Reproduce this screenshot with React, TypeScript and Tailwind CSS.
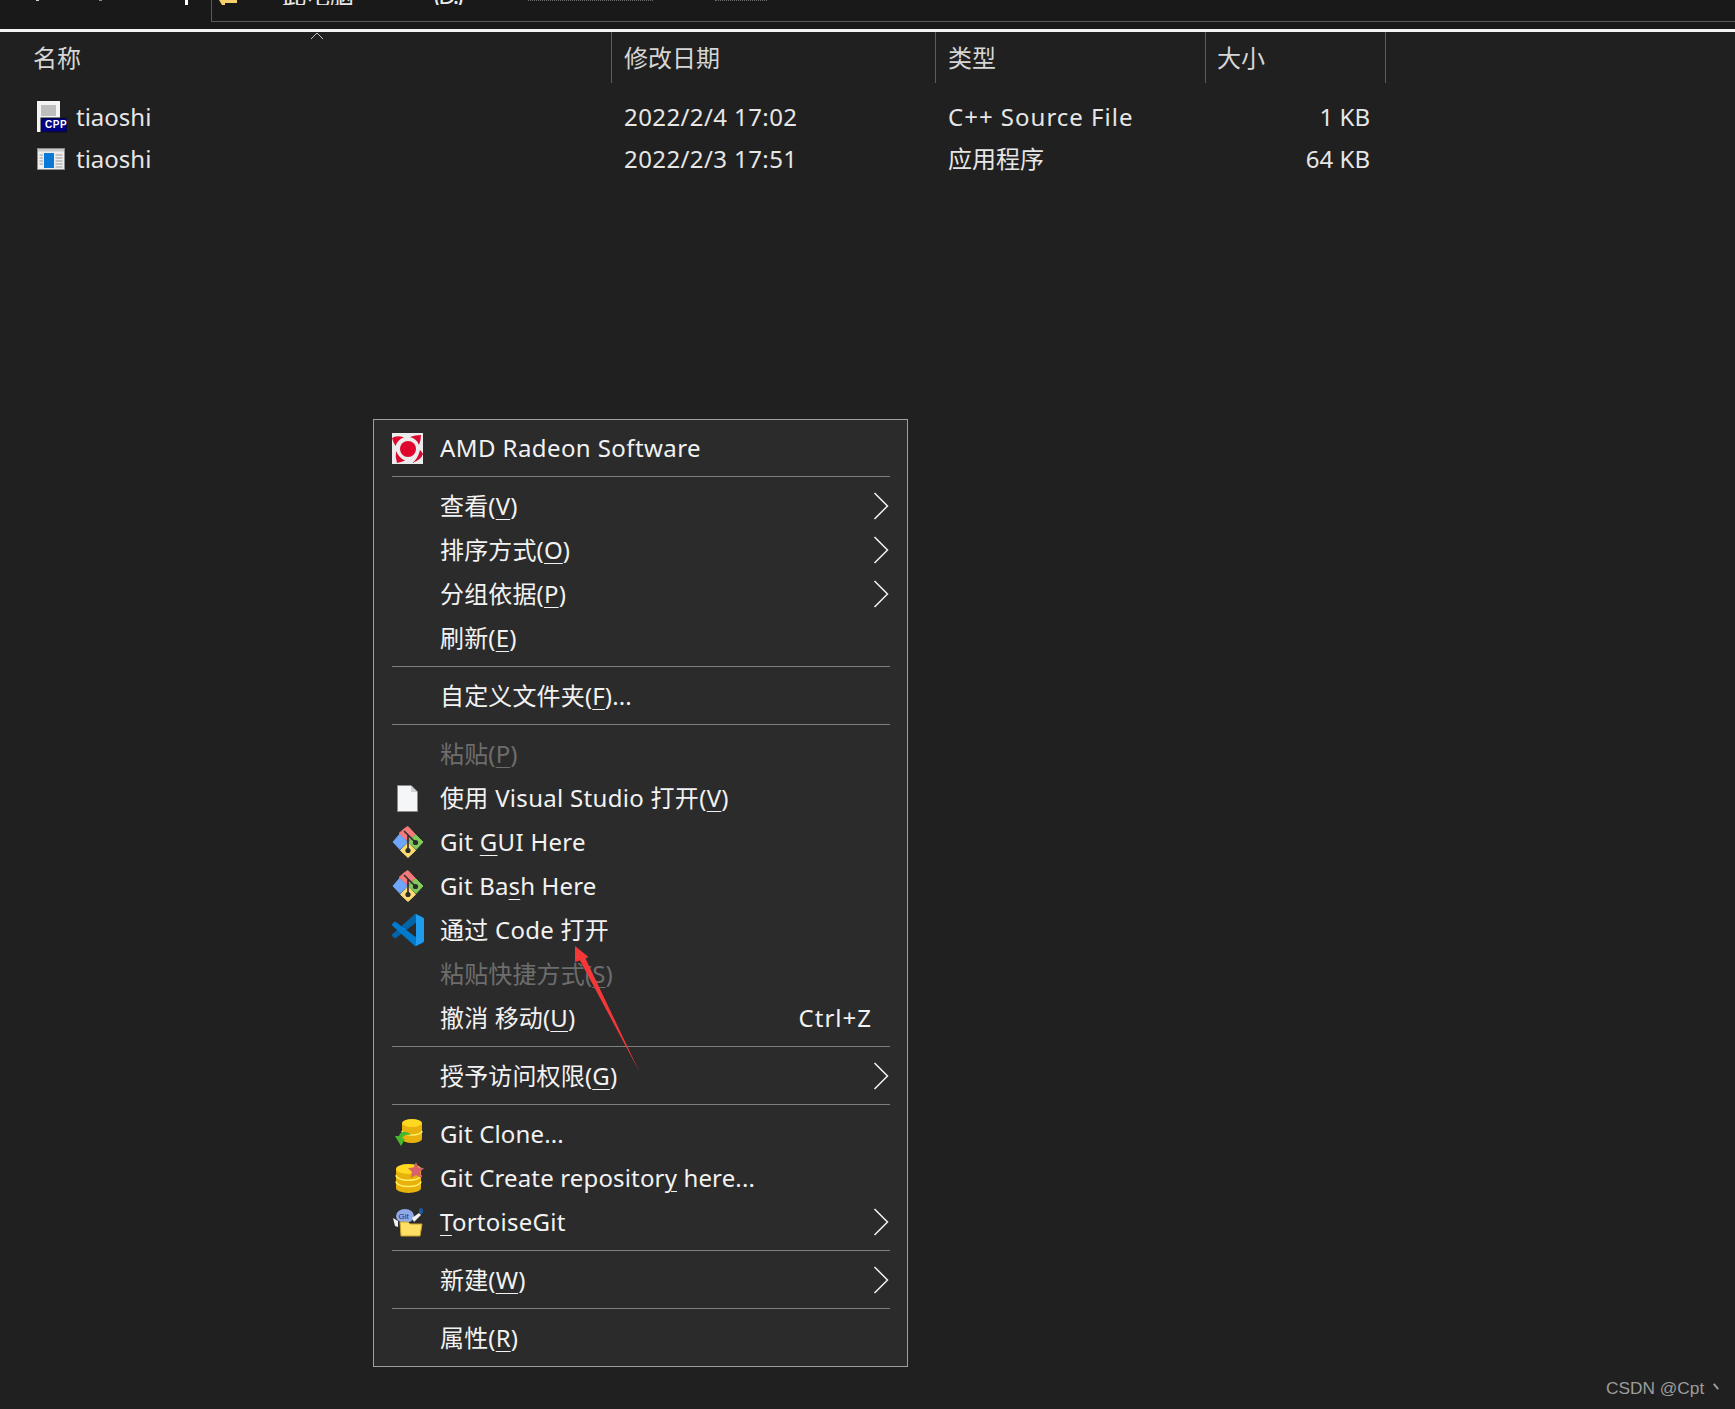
const FONT = "font-['Noto_Sans','Noto_Sans_CJK_SC',sans-serif]";

function AmdIcon() {
  return (
    <svg width="31" height="31" viewBox="0 0 31 31">
      <rect width="31" height="31" fill="#ececec" />
      <circle cx="16" cy="16" r="8" fill="#e0052d" />
      <path d="M0 5 Q5 2 12 4.5 Q6 6 3.5 13 Q1 9 0 5 Z" fill="#e0052d" />
      <path d="M29 2 Q29 7 27 12 Q25 6 18 4 Q23 2 29 2 Z" fill="#d8082f" />
      <path d="M5 30 Q3 24 4 18 Q7 25 13 27.5 Q9 29 5 30 Z" fill="#d8082f" />
      <path d="M31 21 Q29 27 20 30 Q26 26 28 17 Q30 19 31 21 Z" fill="#d8082f" />
    </svg>
  );
}

function DocIcon() {
  return (
    <svg width="21" height="27" viewBox="0 0 21 27">
      <path d="M0.5 0.5 H14 L20.5 7 V26.5 H0.5 Z" fill="#f4f6f8" stroke="#8b8b8b" />
      <path d="M14 0.5 V7 H20.5 Z" fill="#cfd3d6" />
    </svg>
  );
}

function GitIcon() {
  return (
    <svg width="32" height="32" viewBox="0 0 32 32" className="shrink-0" strokeLinejoin="round">
      <path d="M12.5 2.5 L16 0.5 L23 8 L16 15.5 L7 7.5 Z" fill="#f57a7a" stroke="#f57a7a" />
      <path d="M7.5 8.5 L1 16 L8 23.5 L15.5 16 Z" fill="#6ea6fb" stroke="#6ea6fb" />
      <path d="M23.5 8.5 L16.5 16 L24 23.5 L31 16 Z" fill="#7fcb5b" stroke="#7fcb5b" />
      <path d="M16 16.5 L8.5 24.5 L16 31.5 L23.5 24.5 Z" fill="#fbdc72" stroke="#fbdc72" />
      <path d="M12 5 L16 9 V24 M16 9 L23 16" stroke="#2b2b2b" strokeWidth="1.6" fill="none" />
      <circle cx="16" cy="24.5" r="2.6" fill="#2b2b2b" />
      <circle cx="23.5" cy="16.5" r="2.6" fill="#2b2b2b" />
    </svg>
  );
}

function CodeIcon() {
  return (
    <svg width="32" height="32" viewBox="0 0 100 100" className="shrink-0">
      <path d="M96.4614 10.7962L75.8569 0.875542C73.4719 -0.272773 70.6217 0.211611 68.75 2.08333L1.29858 63.5832C-0.515693 65.2373 -0.513607 68.0937 1.30308 69.7452L6.81272 74.754C8.29793 76.1042 10.5347 76.2036 12.1338 74.9905L93.3609 13.3699C96.086 11.3026 100 13.2462 100 16.6667V16.4275C100 14.0265 98.6246 11.8378 96.4614 10.7962Z" fill="#0065a9" />
      <path d="M96.4614 89.2038L75.8569 99.1245C73.4719 100.273 70.6217 99.7884 68.75 97.9167L1.29858 36.4168C-0.515693 34.7627 -0.513607 31.9063 1.30308 30.2548L6.81272 25.246C8.29793 23.8958 10.5347 23.7964 12.1338 25.0095L93.3609 86.6301C96.086 88.6974 100 86.7538 100 83.3333V83.5725C100 85.9735 98.6246 88.1622 96.4614 89.2038Z" fill="#007acc" />
      <path d="M75.8578 99.1263C73.4721 100.274 70.6219 99.7885 68.75 97.9166C71.0564 100.223 75 98.5895 75 95.3278V4.67213C75 1.41039 71.0564 -0.223106 68.75 2.08329C70.6219 0.211402 73.4721 -0.273666 75.8578 0.873633L96.4587 10.7807C98.6234 11.8217 100 14.0112 100 16.4132V83.5871C100 85.9891 98.6234 88.1786 96.4586 89.2196L75.8578 99.1263Z" fill="#1f9cf0" />
    </svg>
  );
}

function Coins({ x, y, w, rows, rowH }: { x: number; y: number; w: number; rows: number; rowH: number }) {
  const rx = w / 2;
  const ry = w / 5;
  const h = rows * rowH;
  return (
    <g>
      <path d={`M${x} ${y + ry} V${y + ry + h} A${rx} ${ry} 0 0 0 ${x + w} ${y + ry + h} V${y + ry} Z`} fill="#e8b10c" />
      {Array.from({ length: rows - 1 }).map((_, i) => (
        <path
          key={i}
          d={`M${x} ${y + ry + (i + 1) * rowH} A${rx} ${ry} 0 0 0 ${x + w} ${y + ry + (i + 1) * rowH}`}
          stroke="#fff06a"
          strokeWidth="1.5"
          fill="none"
        />
      ))}
      <ellipse cx={x + rx} cy={y + ry} rx={rx} ry={ry} fill="#ffd91f" />
    </g>
  );
}

function CloneIcon() {
  return (
    <svg width="32" height="30" viewBox="0 0 32 30" className="shrink-0">
      <Coins x={10} y={0} w={20} rows={2} rowH={8} />
      <path d="M3 17 L9 27 L13 20 L10 19 C12 16 15 15 19 16 C15 11 8 12 7 17 Z" fill="#46b82c" />
    </svg>
  );
}

function CreateIcon() {
  return (
    <svg width="32" height="32" viewBox="0 0 32 32" className="shrink-0">
      <Coins x={4} y={2} w={25} rows={3} rowH={6.3} />
      <path d="M24 0 L26.5 5.5 L32 6 L28 10 L29.5 16 L24 13 L18.5 16 L20 10 L16 6 L21.5 5.5 Z" fill="#d9626a" />
    </svg>
  );
}

function TortoiseIcon() {
  return (
    <svg width="32" height="30" viewBox="0 0 32 30" className="shrink-0">
      <ellipse cx="13" cy="9" rx="9" ry="7" fill="#8fa8e8" />
      <text x="6.5" y="12" fontSize="8" fill="#20306a" fontFamily="Liberation Sans">Git</text>
      <path d="M1 11 L6 14 L6 20 L3 19 Z" fill="#f2f2f2" />
      <path d="M20 11 L27 6 L29 8 L22 15 Z" fill="#f2f2f2" />
      <rect x="27" y="1" width="4" height="6" rx="2" fill="#1c5a9a" />
      <path d="M8 15 H16 L18 17 H30 L28 29 H9 Z" fill="#ffe066" stroke="#c9a227" />
    </svg>
  );
}

function CppFileIcon() {
  return (
    <div className="relative h-[32px] w-[30px] shrink-0">
      <svg width="30" height="32" viewBox="0 0 30 32">
        <rect x="0" y="0" width="23" height="31" fill="#f4f4f4" />
        <rect x="4" y="4" width="15" height="11" fill="#bdbdbd" />
        <rect x="4" y="17" width="26" height="14" fill="#000080" stroke="#111" />
      </svg>
      <span className="absolute left-[8px] top-[18px] font-['Liberation_Sans',sans-serif] text-[10px] leading-[12px] font-bold tracking-[0.5px] text-white">
        CPP
      </span>
    </div>
  );
}

function ExeFileIcon() {
  return (
    <svg width="28" height="22" viewBox="0 0 28 22" className="shrink-0">
      <rect x="0.5" y="0.5" width="27" height="21" fill="#eeeeee" stroke="#8c8c8c" />
      <rect x="1" y="1" width="26" height="2.5" fill="#c9c9c9" />
      <rect x="7" y="5" width="10" height="15" fill="#0a78d7" />
      <path d="M2.5 7H6M2.5 10H6M2.5 13H6M2.5 16H6M18.5 7H25.5M18.5 10H25.5M18.5 13H25.5M18.5 16H25.5M18.5 19H25.5" stroke="#9a9a9a" />
    </svg>
  );
}

function Chevron() {
  return (
    <svg width="16" height="28" viewBox="0 0 16 28" className="shrink-0">
      <path d="M1.5 1 L14.5 14 L1.5 27" stroke="#f2f2f2" strokeWidth="1.5" fill="none" />
    </svg>
  );
}

function Sep() {
  return <div className="mt-[6px] mr-[17px] mb-[7px] ml-[18px] h-px bg-[#7f7f7f]" />;
}

function Item({
  icon,
  children,
  arrow,
  shortcut,
  disabled,
  track = "tracking-[0.15px]",
}: {
  icon?: React.ReactNode;
  children: React.ReactNode;
  arrow?: boolean;
  shortcut?: string;
  disabled?: boolean;
  track?: string;
}) {
  return (
    <div className={`flex h-11 items-center pl-[18px] text-[24px] ${disabled ? "text-[#6d6d6d]" : "text-[#f2f2f2]"}`}>
      <div className="flex w-[48px] shrink-0 items-center">
        <div className="flex w-[31px] justify-center">{icon}</div>
      </div>
      <span className={`flex-1 whitespace-nowrap ${track}`}>{children}</span>
      {shortcut && <span className="mr-[35px] tracking-[1px]">{shortcut}</span>}
      {arrow && <span className="mr-[18px] flex"><Chevron /></span>}
    </div>
  );
}

function U({ children }: { children: React.ReactNode }) {
  return <span className="underline decoration-1 underline-offset-[4px]">{children}</span>;
}

const COLS = [
  { name: "名称", width: "w-[612px]", pad: "pl-[33px]" },
  { name: "修改日期", width: "w-[324px]", pad: "pl-[12px]" },
  { name: "类型", width: "w-[270px]", pad: "pl-[12px]" },
  { name: "大小", width: "w-[180px]", pad: "pl-[11px]" },
];

const FILES = [
  { icon: <CppFileIcon />, gap: "gap-[9px]", date: "2022/2/4 17:02", type: "C++ Source File", typeTrack: "tracking-[1px]", size: "1 KB" },
  { icon: <ExeFileIcon />, gap: "gap-[11px]", date: "2022/2/3 17:51", type: "应用程序", typeTrack: "", size: "64 KB" },
];

export default function App() {
  return (
    <div className={`relative h-[1409px] w-full overflow-hidden bg-[#202020] ${FONT}`}>
      {/* Clipped top of the explorer window */}
      <div className="flex h-[29px] items-start bg-[#191919]">
        <div className="flex h-[5px] w-[211px] shrink-0 items-start">
          <div className="mt-0 ml-[36px] h-[1px] w-[3px] bg-[#cfcfcf]" />
          <div className="ml-[60px] h-[1px] w-[3px] bg-[#8a8a8a]" />
          <div className="ml-[83px] h-[5px] w-[3px] bg-white" />
        </div>
        <div className="h-[22px] flex-1 overflow-hidden border-b border-l border-[#5a5a5a]">
          <div className="flex h-[5px] items-end overflow-hidden pl-[7px] text-[24px] leading-none whitespace-nowrap text-[#e8e8e8]">
            <svg width="18" height="5" viewBox="0 0 18 5" className="shrink-0">
              <path d="M0 0 H18 V3 H6 V5 H3 Z" fill="#f6cf6e" />
            </svg>
            <span className="-mb-[2px] ml-[45px]">此电脑</span>
            <span className="-mb-[2px] ml-[80px] tracking-[-3px]">(D:)</span>
            <div className="mb-[4px] ml-[68px] h-px w-[125px] shrink-0 border-t border-dotted border-[#6a6a6a]" />
            <div className="mb-[4px] ml-[62px] h-px w-[52px] shrink-0 border-t border-dotted border-[#6a6a6a]" />
          </div>
        </div>
      </div>
      <div className="h-[3px] bg-[#f3f3f3]" />

      {/* Column headers */}
      <div className="relative flex h-[51px] items-center text-[24px] text-[#d6d6d6]">
        {COLS.map((c) => (
          <div key={c.name} className={`flex h-full items-center border-r border-[#5c5c5c] ${c.width} ${c.pad}`}>
            {c.name}
          </div>
        ))}
        <svg width="14" height="7" viewBox="0 0 14 7" className="absolute left-[310px] top-0">
          <path d="M1 7 L7 1 L13 7" stroke="#c8c8c8" fill="none" />
        </svg>
      </div>

      {/* File rows */}
      <div className="mt-[13px] text-[24px] text-[#e6e6e6]">
        {FILES.map((f) => (
          <div key={f.type} className="flex h-[42px] items-center">
            <div className={`flex w-[611px] items-center pl-[37px] ${f.gap}`}>
              {f.icon}
              <span>tiaoshi</span>
            </div>
            <div className="w-[324px] pl-[13px] tracking-[0.4px]">{f.date}</div>
            <div className={`w-[270px] pl-[13px] ${f.typeTrack}`}>{f.type}</div>
            <div className="w-[165px] text-right">{f.size}</div>
          </div>
        ))}
      </div>

      {/* Context menu */}
      <div className="absolute left-[373px] top-[419px] w-[535px] border border-[#a0a0a0] bg-[#2b2b2b] py-[6px]">
        <Item icon={<AmdIcon />} track="tracking-[0.42px]">AMD Radeon Software</Item>
        <Sep />
        <Item arrow>查看(<U>V</U>)</Item>
        <Item arrow>排序方式(<U>O</U>)</Item>
        <Item arrow>分组依据(<U>P</U>)</Item>
        <Item>刷新(<U>E</U>)</Item>
        <Sep />
        <Item>自定义文件夹(<U>F</U>)...</Item>
        <Sep />
        <Item disabled>粘贴(<U>P</U>)</Item>
        <Item icon={<DocIcon />} track="tracking-[0.3px]">使用 Visual Studio 打开(<U>V</U>)</Item>
        <Item icon={<GitIcon />} track="tracking-[0.3px]">Git <U>G</U>UI Here</Item>
        <Item icon={<GitIcon />}>Git Ba<U>s</U>h Here</Item>
        <Item icon={<CodeIcon />} track="tracking-[0.25px]">通过 Code 打开</Item>
        <Item disabled>粘贴快捷方式(<U>S</U>)</Item>
        <Item shortcut="Ctrl+Z">撤消 移动(<U>U</U>)</Item>
        <Sep />
        <Item arrow>授予访问权限(<U>G</U>)</Item>
        <Sep />
        <Item icon={<CloneIcon />}>Git Clone...</Item>
        <Item icon={<CreateIcon />}>Git Create repositor<U>y</U> here...</Item>
        <Item icon={<TortoiseIcon />} arrow track="tracking-[0.25px]"><U>T</U>ortoiseGit</Item>
        <Sep />
        <Item arrow>新建(<U>W</U>)</Item>
        <Sep />
        <Item>属性(<U>R</U>)</Item>
      </div>

      {/* Red annotation arrow */}
      <svg width="72" height="134" viewBox="0 0 72 134" className="absolute left-[570px] top-[940px]">
        <path d="M5 6 L18.5 17 L15.5 18.5 L69 131 L10 20.5 L5 22 Z" fill="#f43838" />
      </svg>

      {/* Watermark */}
      <span className="absolute left-[1606px] top-[1377px] font-['Liberation_Sans',sans-serif] text-[17.3px] leading-[22px] text-[#9c9c9c]">
        CSDN @Cpt
      </span>
      <span className="absolute left-[1715px] top-[1383px] h-[7px] w-[2px] -rotate-[40deg] bg-[#9c9c9c]" />
    </div>
  );
}
